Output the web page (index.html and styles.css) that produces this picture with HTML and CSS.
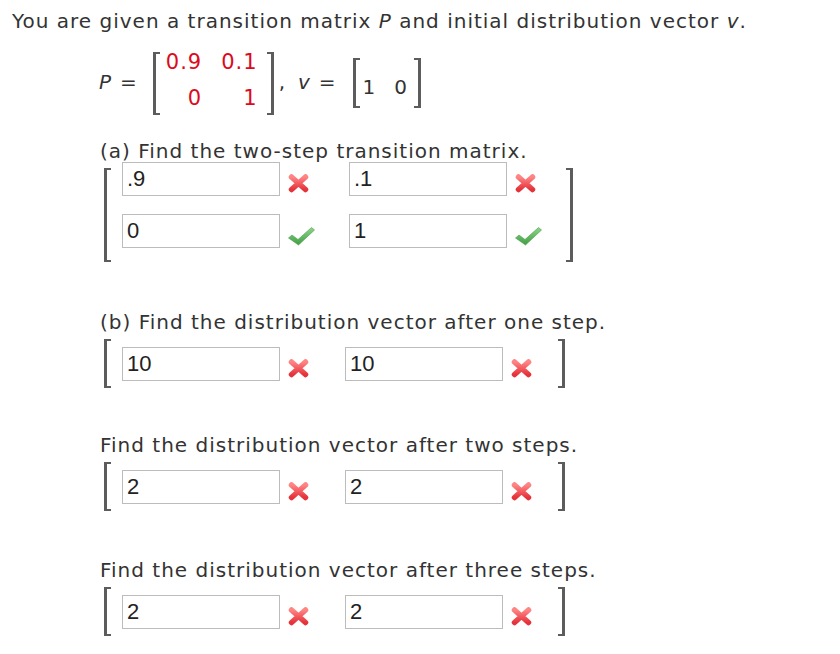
FILE: index.html
```html
<!DOCTYPE html>
<html>
<head>
<meta charset="utf-8">
<link rel="stylesheet" href="styles.css">
</head>
<body>
<div class="page">
  <p class="title">You are given a transition matrix <i>P</i> and initial distribution vector <i>v</i>.</p>

  <div class="eq">
    <span class="lbl"><i>P</i><span class="eqs">=</span></span>
    <span class="brk l pb"></span>
    <div class="mat">
      <span>0.9</span><span>0.1</span>
      <span>0</span><span>1</span>
    </div>
    <span class="brk r pb"></span>
    <span class="lbl comma">,<i class="vv">v</i><span class="eqs">=</span></span>
    <span class="brk l vb"></span>
    <div class="vec"><span>1</span><span>0</span></div>
    <span class="brk r vb"></span>
  </div>

  <section class="part part-a">
    <p class="q">(a) Find the two-step transition matrix.</p>
    <div class="answer ans-mat">
      <span class="brk l"></span>
      <div class="cells cells-mat">
        <div class="cell"><input class="inp" value=".9"><svg class="ico" viewBox="0 0 28 21"><use href="#x"/></svg></div>
        <div class="cell"><input class="inp" value=".1"><svg class="ico" viewBox="0 0 28 21"><use href="#x"/></svg></div>
        <div class="cell"><input class="inp" value="0"><svg class="ico" viewBox="0 0 28 21"><use href="#ok"/></svg></div>
        <div class="cell"><input class="inp" value="1"><svg class="ico" viewBox="0 0 28 21"><use href="#ok"/></svg></div>
      </div>
      <span class="brk r"></span>
    </div>
  </section>

  <section class="part part-b">
    <p class="q">(b) Find the distribution vector after one step.</p>
    <div class="answer ans-vec">
      <span class="brk l"></span>
      <div class="cells cells-vec">
        <div class="cell"><input class="inp" value="10"><svg class="ico" viewBox="0 0 28 21"><use href="#x"/></svg></div>
        <div class="cell"><input class="inp" value="10"><svg class="ico" viewBox="0 0 28 21"><use href="#x"/></svg></div>
      </div>
      <span class="brk r"></span>
    </div>
  </section>

  <section class="part part-c">
    <p class="q">Find the distribution vector after two steps.</p>
    <div class="answer ans-vec">
      <span class="brk l"></span>
      <div class="cells cells-vec">
        <div class="cell"><input class="inp" value="2"><svg class="ico" viewBox="0 0 28 21"><use href="#x"/></svg></div>
        <div class="cell"><input class="inp" value="2"><svg class="ico" viewBox="0 0 28 21"><use href="#x"/></svg></div>
      </div>
      <span class="brk r"></span>
    </div>
  </section>

  <section class="part part-d">
    <p class="q">Find the distribution vector after three steps.</p>
    <div class="answer ans-vec">
      <span class="brk l"></span>
      <div class="cells cells-vec">
        <div class="cell"><input class="inp" value="2"><svg class="ico" viewBox="0 0 28 21"><use href="#x"/></svg></div>
        <div class="cell"><input class="inp" value="2"><svg class="ico" viewBox="0 0 28 21"><use href="#x"/></svg></div>
      </div>
      <span class="brk r"></span>
    </div>
  </section>
</div>

<svg class="defs" width="0" height="0">
  <defs>
    <linearGradient id="gx" x1="0" y1="0" x2="0" y2="1">
      <stop offset="0" stop-color="#ff8585"/>
      <stop offset="1" stop-color="#e5333b"/>
    </linearGradient>
    <linearGradient id="gk" x1="0" y1="0" x2="0" y2="1">
      <stop offset="0" stop-color="#8fd48a"/>
      <stop offset="1" stop-color="#3f9e43"/>
    </linearGradient>
    <g id="x">
      <path d="M4.5 4 L18.5 16.5 M18.5 4 L4.5 16.5" stroke="url(#gx)" stroke-width="5.5" stroke-linecap="round" fill="none"/>
    </g>
    <g id="ok">
      <path d="M1.5 13 L5 10 L11 14.5 L24.5 2.5 L27.5 5 L11.5 20 Z" fill="url(#gk)" stroke="#4a9e4a" stroke-width="0.6" stroke-linejoin="round"/>
    </g>
  </defs>
</svg>
</body>
</html>
```

FILE: styles.css
```css
html, body {
  margin: 0;
  padding: 0;
  background: #ffffff;
}

body {
  font-family: "DejaVu Sans", Verdana, sans-serif;
  font-size: 20px;
  letter-spacing: 1px;
  color: #333333;
}

.page {
  padding: 9px 0 0 12px;
}

.title {
  margin: 0;
  line-height: 24px;
  white-space: nowrap;
}

i {
  font-style: italic;
}

/* equation row */
.eq {
  display: flex;
  align-items: center;
  margin: 19px 0 0 87px;
  height: 63px;
}

.lbl {
  display: flex;
  align-items: baseline;
  line-height: 24px;
  margin-bottom: 4px;
  white-space: nowrap;
}

.eqs {
  margin-left: 8px;
}

.lbl.comma {
  margin-left: 5px;
}

.vv {
  margin-left: 12px;
}

.brk {
  display: block;
  box-sizing: border-box;
  width: 7px;
  border-color: #5c5c5c;
  border-style: solid;
}

.brk.l {
  border-width: 2px 0 2px 3px;
}

.brk.r {
  border-width: 2px 3px 2px 0;
}

.pb {
  height: 63px;
  margin-left: 15px;
}

.pb.r {
  margin-left: 9px;
}

.mat {
  display: grid;
  grid-template-columns: auto auto;
  justify-items: end;
  column-gap: 19px;
  row-gap: 12px;
  font-size: 21px;
  line-height: 24px;
  color: #dc0a1c;
  margin: 0 0 8px 6px;
}

.vb {
  height: 50px;
  margin-left: 16px;
  margin-bottom: 2px;
}

.vb.r {
  margin-left: 6px;
}

.vec {
  display: flex;
  gap: 18px;
  line-height: 24px;
  margin: 6px 0 0 3px;
}

/* parts */
.part {
  margin-left: 88px;
}

.q {
  margin: 0;
  line-height: 24px;
  white-space: nowrap;
}

.part-a {
  margin-top: 24px;
}

.part-b {
  margin-top: 48px;
}

.part-c {
  margin-top: 45px;
}

.part-d {
  margin-top: 47px;
}

.answer {
  display: flex;
  align-items: flex-start;
  margin-left: 4px;
}

.ans-mat {
  margin-top: -1px;
}

.ans-mat .brk {
  height: 94px;
  margin-top: 6px;
}

.ans-mat .brk.r {
  margin-left: 24px;
}

.ans-vec {
  margin-top: 5px;
}

.ans-vec .brk {
  height: 49px;
}

.ans-vec .brk.r {
  margin-left: 20px;
}

.cells {
  display: grid;
  grid-template-columns: auto auto;
  margin-left: 11px;
}

.cells-mat {
  column-gap: 34px;
  row-gap: 18px;
}

.cells-vec {
  column-gap: 30px;
  margin-top: 8px;
}

.cell {
  display: flex;
  align-items: center;
  gap: 7px;
}

.inp {
  box-sizing: border-box;
  width: 158px;
  height: 34px;
  margin: 0;
  padding: 0 4px;
  border: 1px solid #bcbcbc;
  border-radius: 0;
  background: #ffffff;
  font-family: "Liberation Sans", Arial, sans-serif;
  font-size: 22px;
  letter-spacing: 0;
  color: #222222;
  outline: none;
}

.ico {
  display: block;
  width: 28px;
  height: 21px;
  margin-top: 8px;
}

.defs {
  position: absolute;
  width: 0;
  height: 0;
}
```
